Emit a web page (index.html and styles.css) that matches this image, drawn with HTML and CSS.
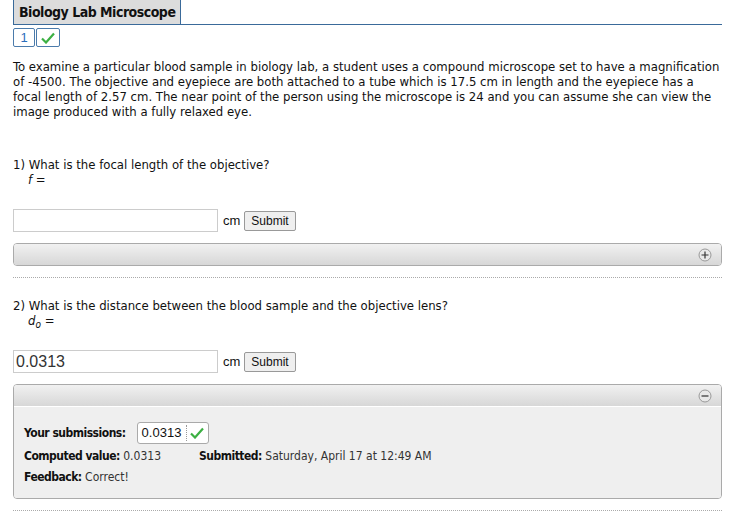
FILE: index.html
```html
<!DOCTYPE html>
<html lang="en">
<head>
    <meta charset="UTF-8">
    <title>Biology Lab Microscope</title>
    <link rel="stylesheet" href="styles.css">
</head>
<body>
    <div class="page">
        <div class="tab-bar">
            <div class="tab">Biology Lab Microscope</div>
        </div>
        <div class="parts">
            <span class="part-num">1</span>
            <span class="part-check">
                <svg width="14" height="12" viewBox="0 0 14 12"><path d="M1 6.5 L5 10.5 L13 1.5" fill="none" stroke="#3cb043" stroke-width="2.2"/></svg>
            </span>
        </div>

        <p class="problem">To examine a particular blood sample in biology lab, a student uses a compound microscope set to have a magnification of -4500. The objective and eyepiece are both attached to a tube which is 17.5 cm in length and the eyepiece has a focal length of 2.57 cm. The near point of the person using the microscope is 24 and you can assume she can view the image produced with a fully relaxed eye.</p>

        <div class="question">
            <div class="q-text">1) What is the focal length of the objective?</div>
            <div class="q-var"><i>f</i> =</div>
            <div class="answer-row">
                <input class="answer" type="text" value="">
                <span class="unit">cm</span>
                <button class="submit">Submit</button>
            </div>
            <div class="panel">
                <div class="panel-head">
                    <span class="toggle">
                        <svg width="14" height="14" viewBox="0 0 14 14"><circle cx="7" cy="7" r="6" fill="#e8e8e8" stroke="#999"/><path d="M7 3.5 V10.5 M3.5 7 H10.5" stroke="#333" stroke-width="1.2"/></svg>
                    </span>
                </div>
            </div>
            <div class="sep"></div>
        </div>

        <div class="question">
            <div class="q-text">2) What is the distance between the blood sample and the objective lens?</div>
            <div class="q-var"><i>d<sub>o</sub></i> =</div>
            <div class="answer-row">
                <input class="answer" type="text" value="0.0313">
                <span class="unit">cm</span>
                <button class="submit">Submit</button>
            </div>
            <div class="panel">
                <div class="panel-head">
                    <span class="toggle">
                        <svg width="14" height="14" viewBox="0 0 14 14"><circle cx="7" cy="7" r="6" fill="#e8e8e8" stroke="#999"/><path d="M3.5 7 H10.5" stroke="#555" stroke-width="1.6"/></svg>
                    </span>
                </div>
                <div class="panel-body">
                    <div class="row first">
                        <b>Your submissions:</b>
                        <span class="sub-box">
                            <span class="sub-val">0.0313</span>
                            <svg width="14" height="12" viewBox="0 0 14 12"><path d="M1 6.5 L5 10.5 L13 1.5" fill="none" stroke="#3cb043" stroke-width="2.2"/></svg>
                        </span>
                    </div>
                    <div class="row">
                        <span class="computed"><b>Computed value:</b> 0.0313</span>
                        <span><b>Submitted:</b> Saturday, April 17 at 12:49 AM</span>
                    </div>
                    <div class="row">
                        <span><b>Feedback:</b> Correct!</span>
                    </div>
                </div>
            </div>
            <div class="sep"></div>
        </div>
    </div>
</body>
</html>
```

FILE: styles.css
```css
body {
    margin: 0;
    padding: 0;
    background: #fff;
    color: #111;
    font-family: Tahoma, "DejaVu Sans Condensed", "DejaVu Sans", sans-serif;
    font-size: 13px;
}

.page {
    padding: 0 23px 0 13px;
}

.tab-bar {
    border-bottom: 1px solid #3a6a9a;
    height: 24px;
}

.tab {
    display: inline-block;
    height: 24px;
    line-height: 24px;
    padding: 0 5px;
    background: #dcdcdc;
    border: 1px solid #3a6a9a;
    border-top: none;
    border-bottom: none;
    font-weight: bold;
    font-size: 14px;
    letter-spacing: -0.5px;
    box-sizing: border-box;
}

.parts {
    display: flex;
    margin-top: 3px;
}

.part-num,
.part-check {
    display: flex;
    align-items: center;
    justify-content: center;
    height: 19px;
    border: 1px solid #4b7bab;
    border-radius: 2px;
    box-sizing: border-box;
}

.part-num {
    width: 22px;
    color: #2a6ebb;
    font-family: Arial, "Liberation Sans", sans-serif;
    font-size: 13px;
}

.part-check {
    width: 24px;
    margin-left: 1px;
}

.problem {
    margin: 12px 0 0;
    line-height: 15px;
}

.question {
    margin-top: 38px;
}

.question + .question {
    margin-top: 20px;
}

.q-text {
    line-height: 16px;
}

.q-var {
    padding-left: 15px;
    line-height: 14px;
}

.q-var sub {
    font-size: 10px;
    vertical-align: -3px;
    line-height: 0;
}

.answer-row {
    display: flex;
    align-items: center;
    margin-top: 22px;
}

.answer {
    width: 205px;
    height: 23px;
    box-sizing: border-box;
    border: 1px solid #ccc;
    padding: 0 2px;
    font-family: Arial, "Liberation Sans", sans-serif;
    font-size: 16px;
    color: #333;
}

.unit {
    margin: 0 4px 0 5px;
    font-family: Arial, "Liberation Sans", sans-serif;
    font-size: 13px;
}

.submit {
    height: 20px;
    padding: 0 6px;
    font-family: Arial, "Liberation Sans", sans-serif;
    font-size: 12px;
    color: #111;
    background: #efefef;
    border: 1px solid #999;
    border-radius: 2px;
}

.panel {
    margin-top: 11px;
    border: 1px solid #aaa;
    border-radius: 4px;
    overflow: hidden;
}

.panel-head {
    height: 21px;
    display: flex;
    align-items: center;
    justify-content: flex-end;
    padding-right: 9px;
    background: linear-gradient(#f1f1f1, #d7d7d7);
}

.toggle {
    display: flex;
}

.panel-body {
    background: #efefef;
    border-top: 1px solid #fff;
    padding: 15px 10px 10px;
    font-size: 12px;
}

.row {
    display: flex;
    align-items: center;
    line-height: 21px;
}

.row.first {
    height: 22px;
    margin-bottom: 2px;
}

.row b {
    font-weight: bold;
    color: #111;
    letter-spacing: -0.5px;
}

.row span {
    color: #333;
}

.sub-box {
    display: inline-flex;
    align-items: center;
    margin-left: 11px;
    height: 22px;
    box-sizing: border-box;
    padding: 0 4px;
    background: #fff;
    border: 1px solid #aaa;
    border-radius: 3px;
}

.sub-box .sub-val {
    padding-right: 5px;
    margin-right: 3px;
    border-right: 1px dotted #999;
    font-family: Arial, "Liberation Sans", sans-serif;
    font-size: 13px;
    line-height: 16px;
    color: #111;
}

.computed {
    width: 175px;
}

.sep {
    margin-top: 11px;
    border-top: 1px dotted #aaa;
}
```
